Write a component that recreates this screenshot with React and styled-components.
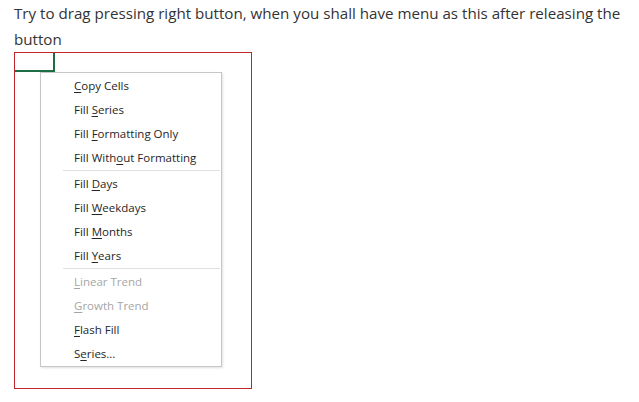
import styled, { createGlobalStyle } from 'styled-components'

const GlobalStyle = createGlobalStyle`
  body {
    margin: 0;
    background: #ffffff;
    font-family: "Open Sans", "Noto Sans", sans-serif;
  }
`

const Page = styled.div`
  padding: 0 14px;
  width: 639px;
  box-sizing: border-box;
`

const Intro = styled.p`
  margin: 0;
  font-size: 15.15px;
  line-height: 26px;
  color: #333333;
`

const Frame = styled.div`
  width: 238px;
  height: 337px;
  box-sizing: border-box;
  border: 1px solid #c0272d;
  position: relative;
`

const Cell = styled.div`
  width: 40px;
  height: 19px;
  box-sizing: border-box;
  border-right: 2px solid #1f6e43;
  border-bottom: 2px solid #1f6e43;
`

const Menu = styled.ul`
  position: absolute;
  left: 25px;
  top: 19px;
  width: 182px;
  margin: 0;
  padding: 1px 0 0;
  list-style: none;
  box-sizing: border-box;
  background: #ffffff;
  border: 1px solid #c6c6c6;
  box-shadow: 1px 1px 2px rgba(0, 0, 0, 0.12);
`

const Item = styled.li`
  height: 24px;
  line-height: 24px;
  padding-left: 33px;
  font-size: 11.5px;
  color: ${props => (props.disabled ? '#a6a6a6' : '#262626')};
  white-space: nowrap;
`

const Key = styled.span`
  text-decoration: underline;
  text-underline-offset: 2px;
`

const Separator = styled.li`
  height: 2px;
  margin-left: 22px;
  margin-right: 1px;
  border-top: 1px solid #e1e1e1;
  box-sizing: border-box;
`

const groups = [
  [
    ['', 'C', 'opy Cells'],
    ['Fill ', 'S', 'eries'],
    ['Fill ', 'F', 'ormatting Only'],
    ['Fill With', 'o', 'ut Formatting']
  ],
  [
    ['Fill ', 'D', 'ays'],
    ['Fill ', 'W', 'eekdays'],
    ['Fill ', 'M', 'onths'],
    ['Fill ', 'Y', 'ears']
  ],
  [
    ['', 'L', 'inear Trend', true],
    ['', 'G', 'rowth Trend', true],
    ['', 'F', 'lash Fill'],
    ['S', 'e', 'ries...']
  ]
]

const App = () => {
  return (
    <>
      <GlobalStyle />
      <Page>
        <Intro>
          Try to drag pressing right button, when you shall have menu as this after releasing the button
        </Intro>
        <Frame>
          <Cell />
          <Menu>
            {groups.map((group, g) => (
              <div key={g}>
                {g > 0 && <Separator />}
                {group.map(([before, key, after, disabled]) => (
                  <Item key={before + key + after} disabled={disabled}>
                    {before}<Key>{key}</Key>{after}
                  </Item>
                ))}
              </div>
            ))}
          </Menu>
        </Frame>
      </Page>
    </>
  )
}

export default App
